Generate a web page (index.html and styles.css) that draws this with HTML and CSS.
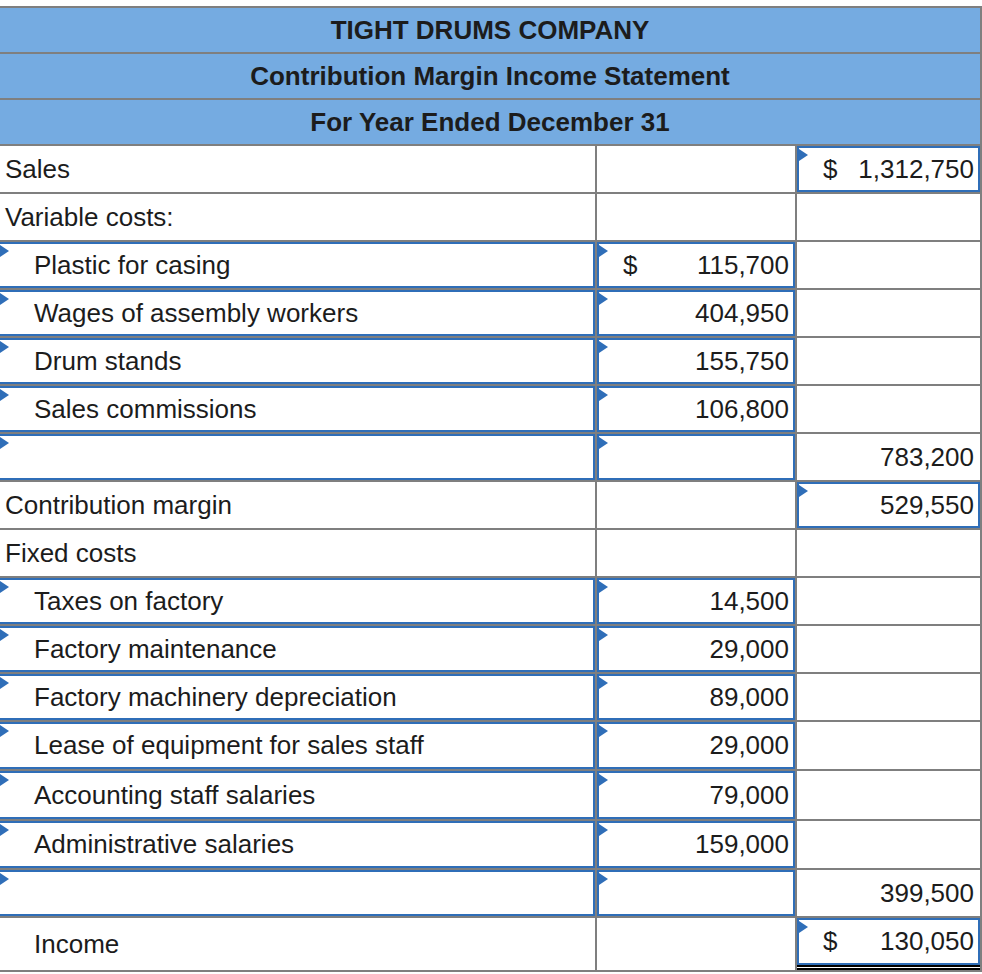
FILE: index.html
```html
<!DOCTYPE html>
<html>
<head>
<meta charset="utf-8">
<link rel="stylesheet" href="styles.css">
</head>
<body>
<div class="sheet">
  <div class="head">TIGHT DRUMS COMPANY</div>
  <div class="head">Contribution Margin Income Statement</div>
  <div class="head">For Year Ended December 31</div>

  <div class="cell label">Sales</div>
  <div class="cell"></div>
  <div class="cell"><div class="inp amt"><span>$</span><span>1,312,750</span></div></div>

  <div class="cell label">Variable costs:</div>
  <div class="cell"></div>
  <div class="cell"></div>

  <div class="cell"><div class="inp lab">Plastic for casing</div></div>
  <div class="cell"><div class="inp amt"><span>$</span><span>115,700</span></div></div>
  <div class="cell"></div>

  <div class="cell"><div class="inp lab">Wages of assembly workers</div></div>
  <div class="cell"><div class="inp amt"><span></span><span>404,950</span></div></div>
  <div class="cell"></div>

  <div class="cell"><div class="inp lab">Drum stands</div></div>
  <div class="cell"><div class="inp amt"><span></span><span>155,750</span></div></div>
  <div class="cell"></div>

  <div class="cell"><div class="inp lab">Sales commissions</div></div>
  <div class="cell"><div class="inp amt"><span></span><span>106,800</span></div></div>
  <div class="cell"></div>

  <div class="cell"><div class="inp lab"></div></div>
  <div class="cell"><div class="inp amt"></div></div>
  <div class="cell num">783,200</div>

  <div class="cell label">Contribution margin</div>
  <div class="cell"></div>
  <div class="cell"><div class="inp amt"><span></span><span>529,550</span></div></div>

  <div class="cell label">Fixed costs</div>
  <div class="cell"></div>
  <div class="cell"></div>

  <div class="cell"><div class="inp lab">Taxes on factory</div></div>
  <div class="cell"><div class="inp amt"><span></span><span>14,500</span></div></div>
  <div class="cell"></div>

  <div class="cell"><div class="inp lab">Factory maintenance</div></div>
  <div class="cell"><div class="inp amt"><span></span><span>29,000</span></div></div>
  <div class="cell"></div>

  <div class="cell"><div class="inp lab">Factory machinery depreciation</div></div>
  <div class="cell"><div class="inp amt"><span></span><span>89,000</span></div></div>
  <div class="cell"></div>

  <div class="cell"><div class="inp lab">Lease of equipment for sales staff</div></div>
  <div class="cell"><div class="inp amt"><span></span><span>29,000</span></div></div>
  <div class="cell"></div>

  <div class="cell"><div class="inp lab">Accounting staff salaries</div></div>
  <div class="cell"><div class="inp amt"><span></span><span>79,000</span></div></div>
  <div class="cell"></div>

  <div class="cell"><div class="inp lab">Administrative salaries</div></div>
  <div class="cell"><div class="inp amt"><span></span><span>159,000</span></div></div>
  <div class="cell"></div>

  <div class="cell"><div class="inp lab"></div></div>
  <div class="cell"><div class="inp amt"></div></div>
  <div class="cell num">399,500</div>

  <div class="cell label indent">Income</div>
  <div class="cell"></div>
  <div class="cell dbl"><div class="inp amt"><span>$</span><span>130,050</span></div></div>
</div>
</body>
</html>
```

FILE: styles.css
```css
html, body {
  margin: 0;
  padding: 0;
  background: #ffffff;
}

body {
  padding-top: 6px;
  font-family: "Liberation Sans", Arial, Helvetica, sans-serif;
  font-size: 26px;
  color: #1c1c1c;
}

.sheet {
  display: grid;
  grid-template-columns: 595px 198px 183px;
  grid-template-rows:
    repeat(3, 44px)
    repeat(12, 46px)
    47px 48px 47px 46px 52px;
  gap: 2px;
  padding: 2px 2px 2px 0;
  background: #7f7f7f;
  width: 980px;
}

.head {
  grid-column: 1 / 4;
  background: #75abe1;
  font-weight: bold;
  display: flex;
  align-items: center;
  justify-content: center;
}

.cell {
  background: #ffffff;
  display: flex;
  align-items: center;
  min-width: 0;
}

.label {
  padding-left: 5px;
}

.indent {
  padding-left: 34px;
}

.num {
  justify-content: flex-end;
  padding-right: 6px;
}

.inp {
  position: relative;
  box-sizing: border-box;
  width: 100%;
  height: 100%;
  border: 2px solid #2f6eb8;
  display: flex;
  align-items: center;
}

.inp::before {
  content: "";
  position: absolute;
  top: 1px;
  left: 0;
  width: 0;
  height: 0;
  border-left: 9px solid #2f6eb8;
  border-top: 6px solid transparent;
  border-bottom: 6px solid transparent;
}

.lab {
  border-left: 0;
  padding-left: 34px;
}

.amt {
  justify-content: space-between;
  padding-left: 24px;
  padding-right: 4px;
}

.dbl {
  border-bottom: 5px double #000000;
}
```
